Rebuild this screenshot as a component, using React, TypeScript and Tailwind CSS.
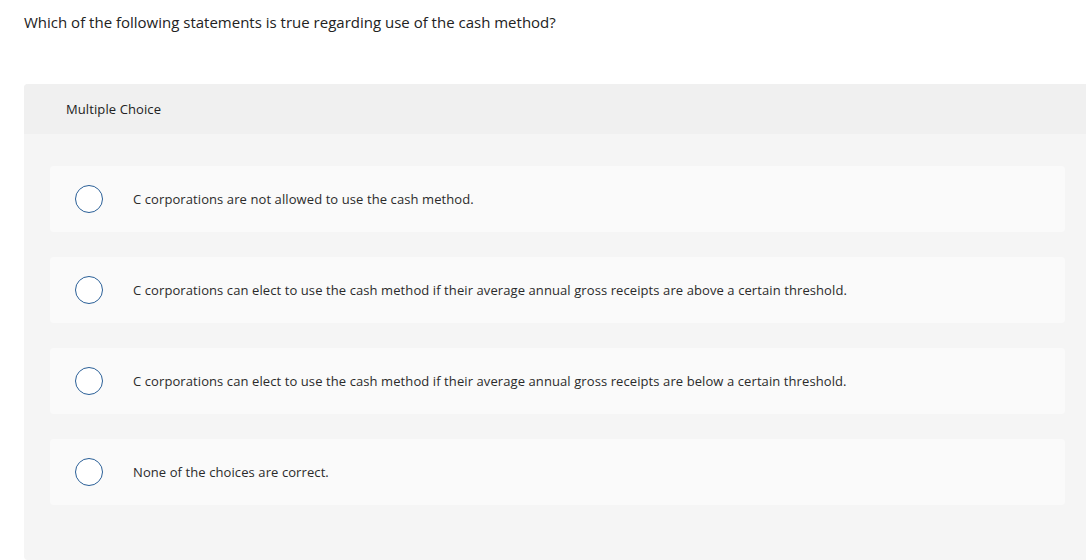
import React from "react";

const options = [
  "C corporations are not allowed to use the cash method.",
  "C corporations can elect to use the cash method if their average annual gross receipts are above a certain threshold.",
  "C corporations can elect to use the cash method if their average annual gross receipts are below a certain threshold.",
  "None of the choices are correct.",
];

export default function App() {
  return (
    <div
      className="w-[1086px] h-[560px] bg-white overflow-hidden flex flex-col"
      style={{ fontFamily: "'Open Sans', Arial, sans-serif" }}
    >
      <p className="pl-6 pt-[12px] h-[84px] text-[15px] leading-[20px] text-[#222]">
        Which of the following statements is true regarding use of the cash method?
      </p>
      <div className="ml-6 flex-1 flex flex-col rounded-l-[4px] bg-[#f5f5f5] overflow-hidden">
        <div className="h-[50px] flex items-center pl-[42px] pt-[2px] bg-[#f0f0f0] text-[13px] tracking-[0.1px] text-[#222]">
          Multiple Choice
        </div>
        <div className="pt-8 pl-[26px] pr-[21px] flex flex-col gap-[25px]">
          {options.map((o) => (
            <div
              key={o}
              className="h-[66px] flex items-center rounded-[4px] bg-[#fafafa]"
            >
              <div className="ml-[25px] w-[28px] h-[28px] rounded-full border-[1.5px] border-[#2a5f97] bg-white shrink-0" />
              <span className="ml-[30px] pt-[2px] text-[13px] tracking-[0.09px] text-[#2b2b2b]">{o}</span>
            </div>
          ))}
        </div>
      </div>
    </div>
  );
}
